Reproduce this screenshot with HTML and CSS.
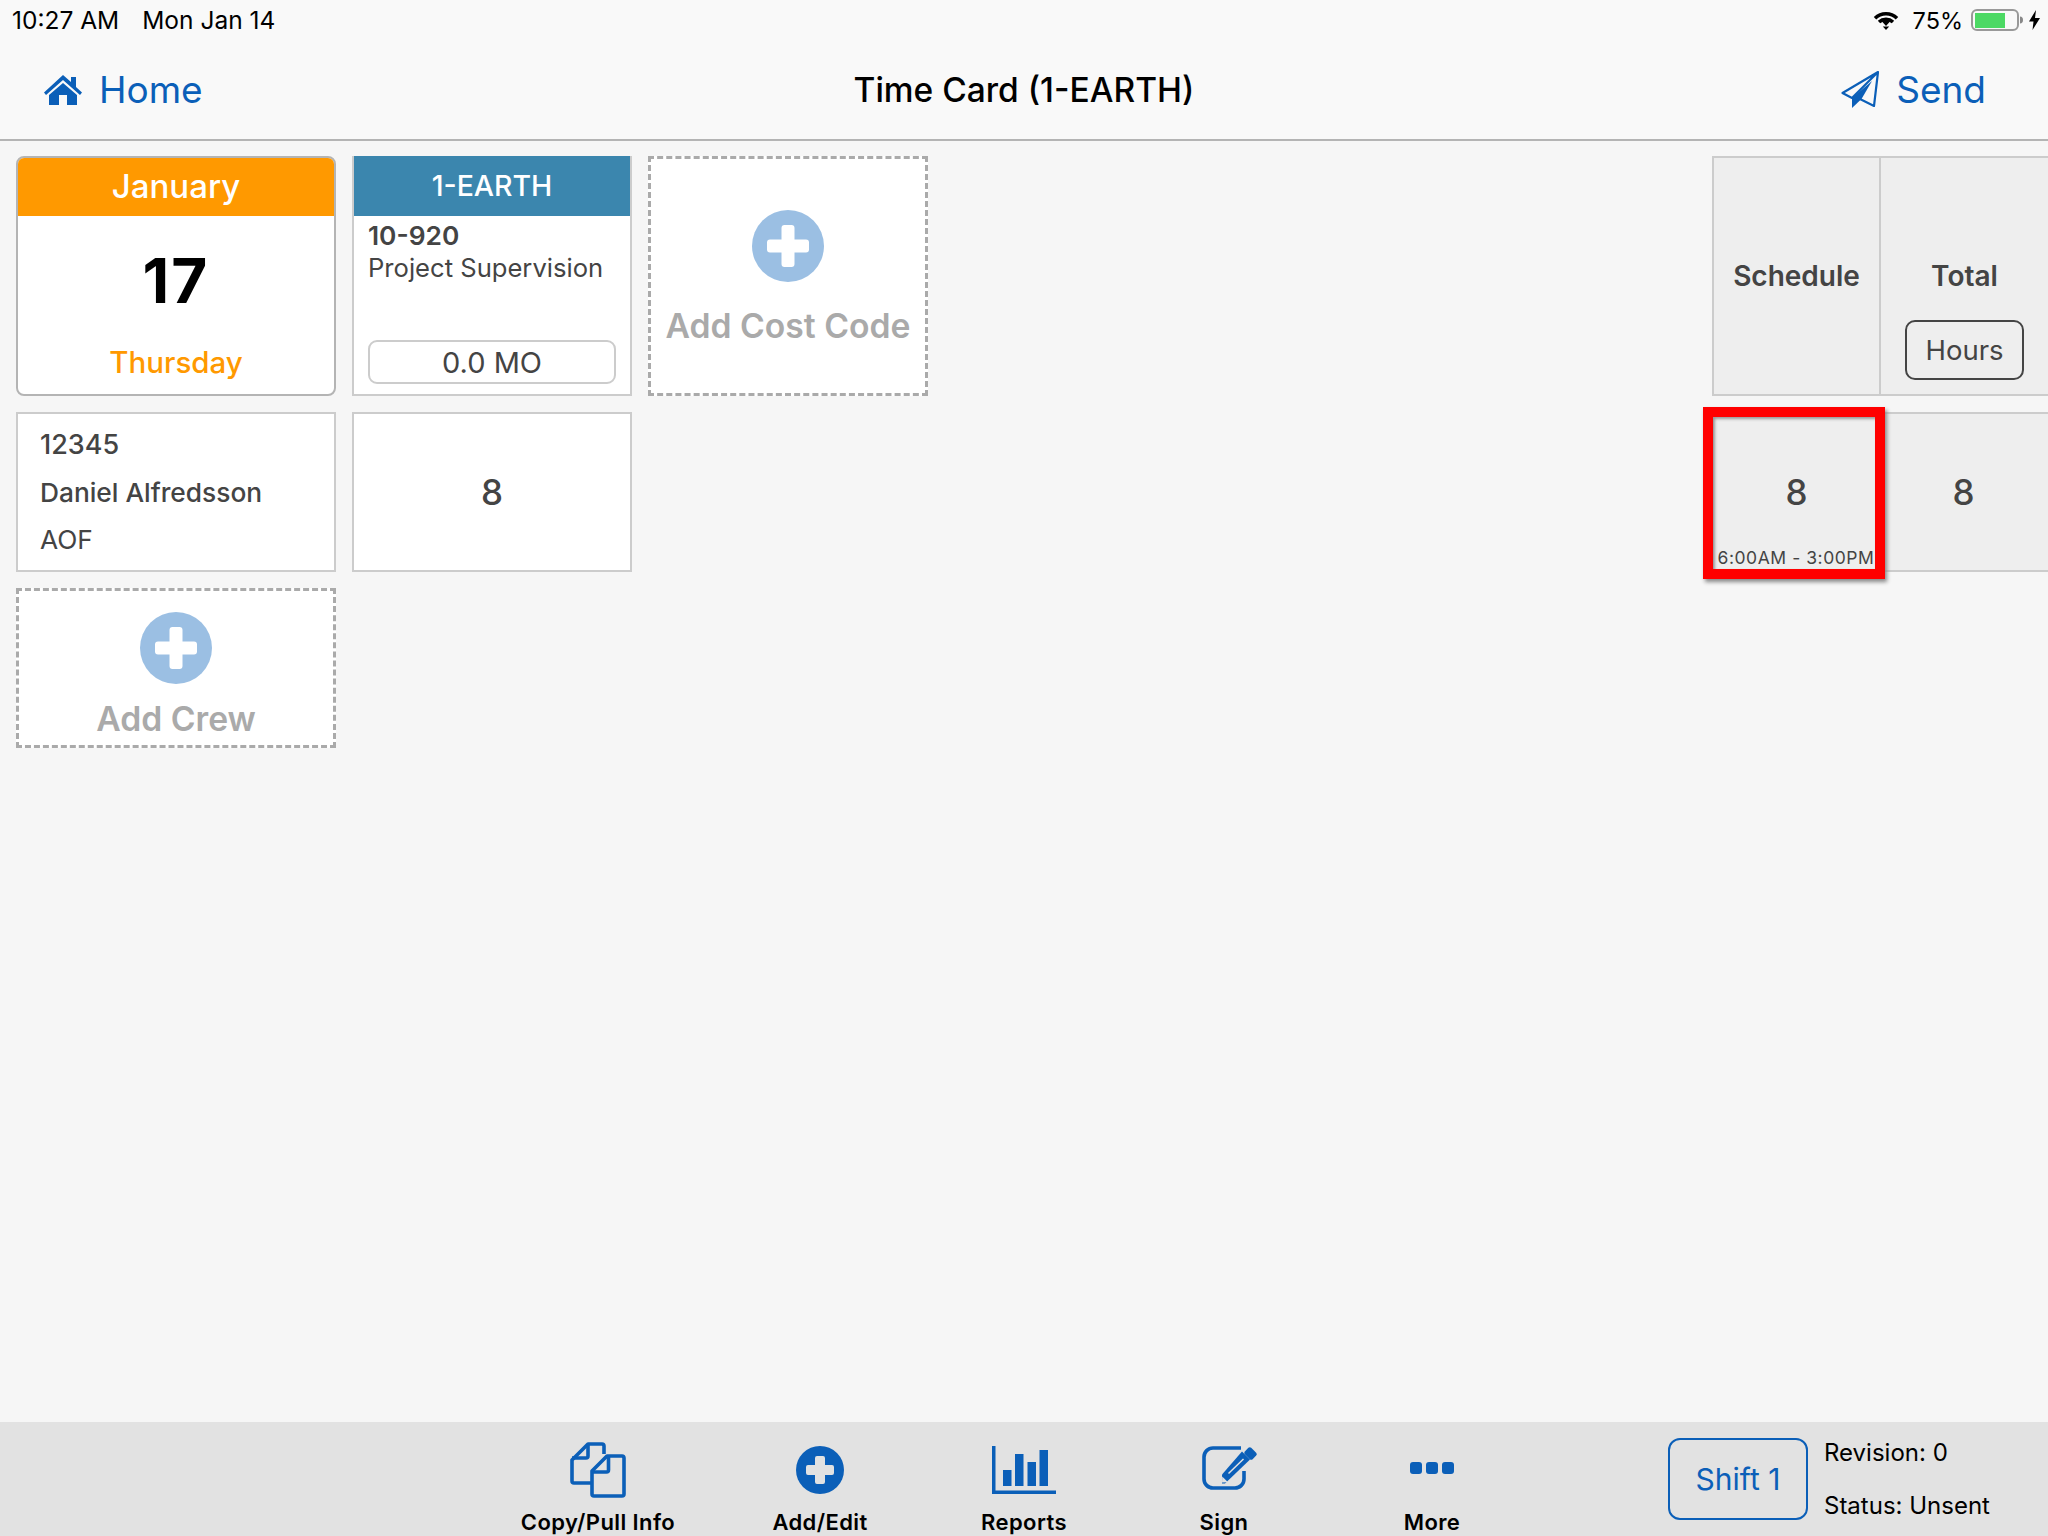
FILE: index.html
```html
<!DOCTYPE html>
<html lang="en">
<head>
<meta charset="utf-8">
<title>Time Card</title>
<link rel="stylesheet" href="styles.css">
</head>
<body>
<div class="app">
  <header class="top">
    <div class="status">
      <div class="status-left"><span>10:27 AM</span><span>Mon Jan 14</span></div>
      <div class="status-right">
        <svg class="wifi" viewBox="0 0 28 20"><path d="M14 16l4-4.400a6 6 0 0 0-8 0zM14 20l3.200-3.500h-6.400z" fill="#000"/><path d="M3 8.200a16 16 0 0 1 22 0M7 12a10.500 10.500 0 0 1 14 0" fill="none" stroke="#000" stroke-width="3.600"/></svg>
        <span class="pct">75%</span>
        <svg class="battery" viewBox="0 0 52 22"><rect x="1" y="1" width="46" height="20" rx="5" fill="none" stroke="#999" stroke-width="2"/><rect x="4" y="4" width="30" height="15" fill="#4cd964"/><path d="M49 7.500c2 0 3 1.500 3 3.500s-1 3.500-3 3.500z" fill="#888"/></svg>
        <svg class="bolt" viewBox="0 0 11 20"><path d="M7 0L0 11.500h4.500L3.500 20 11 8H6z" fill="#000"/></svg>
      </div>
    </div>
    <nav class="nav">
      <a class="nav-link home">
        <svg class="home-icon" viewBox="0 0 38 30"><path d="M19 0L27 7V2h5v10l6 5.500-2 2.500L19 5 2 20l-2-2.500z" fill="#0b5fb8"/><path d="M19 8L5 20v10h10V20h8v10h10V20z" fill="#0b5fb8"/></svg>
        <span>Home</span>
      </a>
      <h1 class="title">Time Card (1-EARTH)</h1>
      <a class="nav-link send">
        <svg class="send-icon" viewBox="0 0 38 38"><path d="M37 1L1.500 22 11 27zM37 1l-4 34-14-7" fill="none" stroke="#0b5fb8" stroke-width="2.200" stroke-linejoin="round"/><path d="M31 10L11 27v10l9.500-9z" fill="#0b5fb8"/></svg>
        <span>Send</span>
      </a>
    </nav>
  </header>

  <main class="main">
    <section class="board">
      <div class="date-card">
        <div class="date-month">January</div>
        <div class="date-day">17</div>
        <div class="date-weekday">Thursday</div>
      </div>
      <div class="card code-card">
        <div class="code-head">1-EARTH</div>
        <div class="code-body">
          <div class="code-num">10-920</div>
          <div class="code-name">Project Supervision</div>
          <div class="code-pill">0.0 MO</div>
        </div>
      </div>
      <div class="add-card add-cost">
        <svg class="plus" viewBox="0 0 72 72"><circle cx="36" cy="36" r="36" fill="#9bbfe3"/><path d="M32.500 15h7a3 3 0 0 1 3 3v11.500H54a3 3 0 0 1 3 3v7a3 3 0 0 1-3 3H42.500V54a3 3 0 0 1-3 3h-7a3 3 0 0 1-3-3V42.500H18a3 3 0 0 1-3-3v-7a3 3 0 0 1 3-3h11.500V18a3 3 0 0 1 3-3z" fill="#fff"/></svg>
        <div class="add-label">Add Cost Code</div>
      </div>
      <div class="card crew-card">
        <div class="crew-id">12345</div>
        <div class="crew-name">Daniel Alfredsson</div>
        <div class="crew-role">AOF</div>
      </div>
      <div class="card value-card">8</div>
      <div class="add-card add-crew">
        <svg class="plus" viewBox="0 0 72 72"><circle cx="36" cy="36" r="36" fill="#9bbfe3"/><path d="M32.500 15h7a3 3 0 0 1 3 3v11.500H54a3 3 0 0 1 3 3v7a3 3 0 0 1-3 3H42.500V54a3 3 0 0 1-3 3h-7a3 3 0 0 1-3-3V42.500H18a3 3 0 0 1-3-3v-7a3 3 0 0 1 3-3h11.500V18a3 3 0 0 1 3-3z" fill="#fff"/></svg>
        <div class="add-label">Add Crew</div>
      </div>
    </section>

    <section class="summary">
      <div class="sum-head sched-head"><span class="sum-title">Schedule</span></div>
      <div class="sum-head total-head"><span class="sum-title">Total</span><span class="hours-btn">Hours</span></div>
      <div class="sum-cell sched-cell">
        <span class="sum-value">8</span>
        <span class="sum-time">6:00AM - 3:00PM</span>
        <div class="highlight"></div>
      </div>
      <div class="sum-cell total-cell"><span class="sum-value">8</span></div>
    </section>
  </main>

  <footer class="bar">
    <div class="tools">
      <div class="tool">
        <svg class="ic-copy" viewBox="0 0 56 56"><path d="M34 12V4a2 2 0 0 0-2-2H18L2 18v21a2 2 0 0 0 2 2h17" fill="none" stroke="#0b5fb8" stroke-width="3.600" stroke-linejoin="round"/><path d="M18 2v12a2 2 0 0 1-2 2H2" fill="none" stroke="#0b5fb8" stroke-width="3.600"/><path d="M37 14h15a2 2 0 0 1 2 2v36a2 2 0 0 1-2 2H24a2 2 0 0 1-2-2V29z" fill="none" stroke="#0b5fb8" stroke-width="3.600" stroke-linejoin="round"/><path d="M38.500 14v14a2 2 0 0 1-2 2H22" fill="none" stroke="#0b5fb8" stroke-width="3.600"/></svg>
        <span class="tool-label">Copy/Pull Info</span>
      </div>
      <div class="tool">
        <svg class="ic-add" viewBox="0 0 48 48"><circle cx="24" cy="24" r="24" fill="#0b5fb8"/><path d="M21 10h6a2 2 0 0 1 2 2v7h7a2 2 0 0 1 2 2v6a2 2 0 0 1-2 2h-7v7a2 2 0 0 1-2 2h-6a2 2 0 0 1-2-2v-7h-7a2 2 0 0 1-2-2v-6a2 2 0 0 1 2-2h7v-7a2 2 0 0 1 2-2z" fill="#e2e2e2"/></svg>
        <span class="tool-label">Add/Edit</span>
      </div>
      <div class="tool">
        <svg class="ic-reports" viewBox="0 0 64 48"><path d="M0 0h3.500v44.500H64V48H0z" fill="#0b5fb8"/><rect x="11" y="24" width="8.500" height="16" fill="#0b5fb8"/><rect x="23" y="8" width="8.500" height="32" fill="#0b5fb8"/><rect x="35.500" y="16" width="8.500" height="24" fill="#0b5fb8"/><rect x="47.500" y="4" width="8.500" height="36" fill="#0b5fb8"/></svg>
        <span class="tool-label">Reports</span>
      </div>
      <div class="tool">
        <svg class="ic-sign" viewBox="0 0 56 44"><path d="M39 2H11a9 9 0 0 0-9 9v22a9 9 0 0 0 9 9h22a9 9 0 0 0 9-9V25" fill="none" stroke="#0b5fb8" stroke-width="3.600"/><path d="M40 5.500l8 8-1 1-24 23H20v-9z" fill="#0b5fb8"/><path d="M20 36.500l.2-6 5.800 5.800z" fill="#e2e2e2"/><path d="M26.500 27.500L41.500 13" stroke="#e2e2e2" stroke-width="1.500" fill="none"/><rect x="44" y="2" width="9" height="11" rx="2" transform="rotate(-45 48.500 7.500)" fill="#0b5fb8"/></svg>
        <span class="tool-label">Sign</span>
      </div>
      <div class="tool">
        <div class="ic-more"><i></i><i></i><i></i></div>
        <span class="tool-label">More</span>
      </div>
    </div>
    <div class="shift">Shift 1</div>
    <div class="meta">
      <div>Revision: 0</div>
      <div>Status: Unsent</div>
    </div>
  </footer>
</div>
</body>
</html>
```
FILE: styles.css
```css
* { box-sizing: border-box; }
html, body { margin: 0; padding: 0; }
body {
  font-family: Inter, "Liberation Sans", sans-serif;
  background: #f6f6f6;
  color: #444;
}
.app { width: 2048px; height: 1536px; display: flex; flex-direction: column; overflow: hidden; }

.top { background: #f9f9f9; border-bottom: 2px solid #b4b4b4; height: 141px; }
.status { height: 40px; display: flex; justify-content: space-between; align-items: center; padding: 0 8px 0 12px; color: #000; font-size: 24.500px; }
.status-left { display: flex; gap: 23px; }
.status-right { display: flex; align-items: center; }
.wifi { width: 28px; height: 20px; }
.pct { margin-left: 13px; font-size: 23.500px; }
.battery { width: 52px; height: 22px; margin-left: 8px; }
.bolt { width: 11px; height: 20px; margin-left: 6px; }

.nav { height: 99px; display: flex; align-items: center; justify-content: space-between; padding: 0 62px 0 44px; }
.nav-link { display: flex; align-items: center; color: #0b5fb8; font-size: 37px; }
.home-icon { width: 38px; height: 30px; margin-right: 17px; }
.send-icon { width: 38px; height: 38px; margin-right: 17px; }
.title { flex: 1; margin: 0; text-align: center; font-size: 33.500px; font-weight: 500; color: #000; padding-left: 4px; }

.main { flex: 1; display: flex; justify-content: space-between; padding: 15px 0 0 16px; }
.board { display: grid; grid-template-columns: 320px 280px 280px; grid-template-rows: 240px 160px 160px; gap: 16px; align-self: start; }
.summary { display: grid; grid-template-columns: 167px 169px; grid-template-rows: 240px 160px; row-gap: 16px; width: 336px; align-self: start; }

.card { background: #fff; border: 2px solid #ccc; }
.date-card { background: #fff; border: 2px solid #b4b4b4; border-radius: 8px; overflow: hidden; display: flex; flex-direction: column; align-items: center; }
.date-month { align-self: stretch; height: 58px; padding-bottom: 2px; background: #ff9900; color: #fff; font-size: 33px; font-weight: 500; display: flex; align-items: center; justify-content: center; }
.date-day { color: #000; font-size: 62px; font-weight: 700; line-height: 66px; margin-top: 32px; letter-spacing: 2px; }
.date-weekday { color: #ff9900; font-size: 29.500px; font-weight: 500; line-height: 36px; margin-top: 30px; }

.code-card { display: flex; flex-direction: column; border-top: 0; }
.code-head { height: 60px; padding-bottom: 2px; background: #3b86ae; color: #fff; font-size: 28.500px; font-weight: 500; display: flex; align-items: center; justify-content: center; }
.code-body { flex: 1; display: flex; flex-direction: column; padding: 0 14px 10px; }
.code-num { font-size: 26.300px; font-weight: 600; line-height: 32px; margin-top: 4px; }
.code-name { font-size: 25.600px; line-height: 32px; }
.code-pill { margin-top: auto; height: 44px; border: 2px solid #ccc; border-radius: 9px; font-size: 29px; display: flex; align-items: center; justify-content: center; }

.add-card { background: #fff; border: 3px dashed #aaa; display: flex; flex-direction: column; align-items: center; color: #aaa; }
.add-cost { padding-top: 51px; }
.add-crew { padding-top: 21px; grid-column: 1; }
.plus { width: 72px; height: 72px; }
.add-label { font-size: 33.700px; font-weight: 600; line-height: 40px; }
.add-cost .add-label { margin-top: 24px; }
.add-crew .add-label { margin-top: 15px; }

.crew-card { padding: 15px 22px 14px; display: flex; flex-direction: column; justify-content: space-between; font-size: 26.300px; line-height: 32px; }
.crew-id { font-weight: 500; font-size: 27px; }
.crew-name { font-weight: 500; }
.value-card { display: flex; align-items: center; justify-content: center; font-size: 35px; font-weight: 500; }

.sum-head { background: #eee; border: 2px solid #ccc; display: flex; flex-direction: column; align-items: center; padding-top: 100px; }
.sched-head { border-right: 0; }
.total-head { border-right: 0; }
.sum-title { font-size: 28px; font-weight: 600; line-height: 36px; }
.hours-btn { margin-top: 26px; width: 119px; height: 60px; border: 2px solid #444; border-radius: 10px; font-size: 27.500px; display: flex; align-items: center; justify-content: center; }
.sum-cell { background: #eee; border: 2px solid #ccc; position: relative; display: flex; align-items: center; justify-content: center; }
.sched-cell { border-right: 0; }
.total-cell { border-right: 0; border-left: 0; }
.sum-value { font-size: 35px; font-weight: 500; }
.sum-time { position: absolute; left: 0; right: 1px; bottom: 1px; text-align: center; font-size: 17.500px; line-height: 22px; letter-spacing: 0.550px; }
.highlight { position: absolute; left: -11px; top: -7px; width: 182px; height: 172px; border: 10px solid #f00; box-shadow: 2px 3px 4px #888, inset 2px 2px 3px #999; z-index: 2; }

.bar { height: 114px; background: #e2e2e2; display: flex; }
.tools { display: grid; grid-template-columns: 200px 244px 164px 236px 180px; margin-left: 498px; }
.tool { position: relative; height: 114px; display: flex; flex-direction: column; align-items: center; }
.tool-label { position: absolute; bottom: -1px; left: 0; right: 0; text-align: center; color: #000; font-size: 22px; font-weight: 600; line-height: 30px; letter-spacing: 0.400px; }
.ic-copy { width: 56px; height: 56px; margin-top: 20px; }
.ic-add { width: 48px; height: 48px; margin-top: 24px; }
.ic-reports { width: 64px; height: 48px; margin-top: 24px; }
.ic-sign { width: 56px; height: 44px; margin-top: 24px; margin-left: 12px; }
.ic-more { display: flex; gap: 4px; margin-top: 40px; }
.ic-more i { width: 12px; height: 12px; border-radius: 3px; background: #0b5fb8; display: block; }

.shift { margin-left: 146px; margin-top: 16px; width: 140px; height: 82px; border: 2px solid #0b5fb8; border-radius: 12px; color: #0b5fb8; font-size: 30px; display: flex; align-items: center; justify-content: center; }
.meta { margin-left: 16px; color: #000; font-size: 24px; line-height: 29px; padding-top: 16px; display: flex; flex-direction: column; gap: 24px; }
```
